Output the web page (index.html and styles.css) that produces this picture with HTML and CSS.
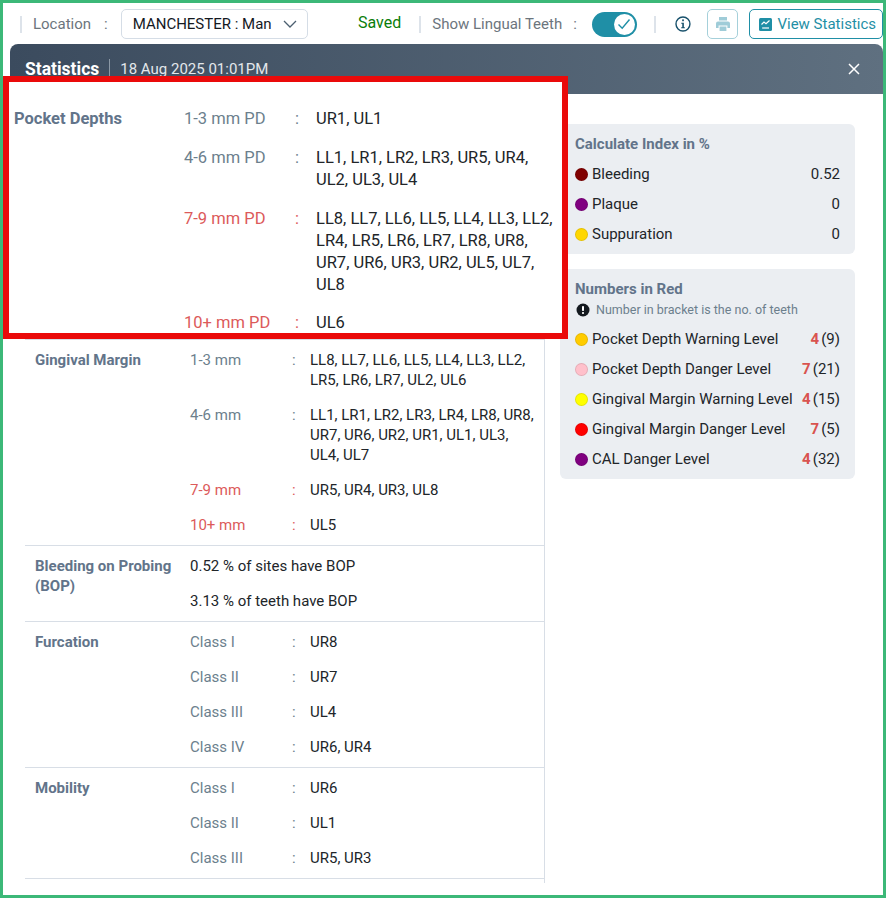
FILE: index.html
```html
<!DOCTYPE html>
<html lang="en">
<head>
    <meta charset="UTF-8">
    <meta name="viewport" content="width=device-width, initial-scale=1.0">
    <title>Statistics</title>
    <link rel="stylesheet" href="styles.css">
</head>
<body>
<div class="frame">

    <div class="toolbar">
        <span class="divider first"></span>
        <span class="tool-label">Location</span>
        <span class="tool-label colon-loc">:</span>
        <div class="select">
            <span>MANCHESTER : Man</span>
            <svg width="14" height="8" viewBox="0 0 14 8"><path d="M1 1l6 6 6-6" fill="none" stroke="#4b5f70" stroke-width="1.3"/></svg>
        </div>
        <span class="saved">Saved</span>
        <span class="divider saved-div"></span>
        <span class="tool-label">Show Lingual Teeth</span>
        <span class="tool-label colon-ling">:</span>
        <div class="toggle">
            <div class="knob">
                <svg width="14" height="12" viewBox="0 0 14 12"><path d="M1.5 6.5l3.7 3.7L12.5 1.5" fill="none" stroke="#1f8fa6" stroke-width="1.4"/></svg>
            </div>
        </div>
        <span class="divider toggle-div"></span>
        <svg class="info-icon" width="16" height="16" viewBox="0 0 16 16">
            <circle cx="8" cy="8" r="7" fill="none" stroke="#17506b" stroke-width="1.4"/>
            <rect x="7.2" y="3.4" width="1.7" height="1.8" fill="#17506b"/>
            <path d="M6.3 6.7h2.6v4.6h1v1H6.2v-1h1.1V7.7h-1z" fill="#17506b"/>
        </svg>
        <button class="print-btn">
            <svg width="14" height="14" viewBox="0 0 14 14"><path d="M3 0h8v3.4H3zM2 4.400h10a2 2 0 0 1 2 2V11h-2.600V8.600H2.600V11H0V6.400a2 2 0 0 1 2-2zM3.600 9.600h6.800V14H3.600z" fill="#9fccd8"/></svg>
        </button>
        <button class="stats-btn">
            <svg width="13" height="13" viewBox="0 0 13 13">
                <rect width="13" height="13" rx="1.500" fill="#1f8fa6"/>
                <path d="M2.500 6.500l2.500-2.500 2 1.600L10.500 2.500" fill="none" stroke="#fff" stroke-width="1.200"/>
                <path d="M3 10h7" stroke="#fff" stroke-width="1.200"/>
            </svg>
            <span>View Statistics</span>
        </button>
    </div>

    <div class="panel">
        <div class="panel-head">
            <span class="panel-title">Statistics</span>
            <span class="panel-date">18 Aug 2025 01:01PM</span>
            <svg class="close" width="12" height="12" viewBox="0 0 12 12"><path d="M1 1l10 10M11 1L1 11" stroke="#fff" stroke-width="1.500"/></svg>
        </div>

        <div class="panel-body">
            <div class="details">

                <div class="section">
                    <div class="section-name">Gingival Margin</div>
                    <div class="rows">
                        <div class="row"><span class="key">1-3 mm</span><span class="colon">:</span><span class="val">LL8, LL7, LL6, LL5, LL4, LL3, LL2, LR5, LR6, LR7, UL2, UL6</span></div>
                        <div class="row"><span class="key">4-6 mm</span><span class="colon">:</span><span class="val">LL1, LR1, LR2, LR3, LR4, LR8, UR8, UR7, UR6, UR2, UR1, UL1, UL3, UL4, UL7</span></div>
                        <div class="row danger"><span class="key">7-9 mm</span><span class="colon">:</span><span class="val">UR5, UR4, UR3, UL8</span></div>
                        <div class="row danger"><span class="key">10+ mm</span><span class="colon">:</span><span class="val">UL5</span></div>
                    </div>
                </div>

                <div class="section">
                    <div class="section-name">Bleeding on Probing (BOP)</div>
                    <div class="rows">
                        <div class="row"><span class="val">0.52 % of sites have BOP</span></div>
                        <div class="row"><span class="val">3.13 % of teeth have BOP</span></div>
                    </div>
                </div>

                <div class="section">
                    <div class="section-name">Furcation</div>
                    <div class="rows">
                        <div class="row"><span class="key">Class I</span><span class="colon">:</span><span class="val">UR8</span></div>
                        <div class="row"><span class="key">Class II</span><span class="colon">:</span><span class="val">UR7</span></div>
                        <div class="row"><span class="key">Class III</span><span class="colon">:</span><span class="val">UL4</span></div>
                        <div class="row"><span class="key">Class IV</span><span class="colon">:</span><span class="val">UR6, UR4</span></div>
                    </div>
                </div>

                <div class="section">
                    <div class="section-name">Mobility</div>
                    <div class="rows">
                        <div class="row"><span class="key">Class I</span><span class="colon">:</span><span class="val">UR6</span></div>
                        <div class="row"><span class="key">Class II</span><span class="colon">:</span><span class="val">UL1</span></div>
                        <div class="row"><span class="key">Class III</span><span class="colon">:</span><span class="val">UR5, UR3</span></div>
                    </div>
                </div>

            </div>

            <div class="side">
                <div class="card">
                    <div class="card-title">Calculate Index in %</div>
                    <div class="card-row"><span class="dot maroon"></span><span class="card-name">Bleeding</span><span>0.52</span></div>
                    <div class="card-row"><span class="dot purple"></span><span class="card-name">Plaque</span><span>0</span></div>
                    <div class="card-row"><span class="dot gold"></span><span class="card-name">Suppuration</span><span>0</span></div>
                </div>
                <div class="card">
                    <div class="card-title">Numbers in Red</div>
                    <div class="note">
                        <svg width="14" height="14" viewBox="0 0 14 14"><circle cx="7" cy="7" r="6.500" fill="#14191f"/><rect x="6" y="3" width="2" height="5" rx="0.800" fill="#fff"/><rect x="6" y="9" width="2" height="2" rx="0.800" fill="#fff"/></svg>
                        <span>Number in bracket is the no. of teeth</span>
                    </div>
                    <div class="card-row"><span class="dot amber"></span><span class="card-name">Pocket Depth Warning Level</span><span class="count"><b>4</b> (9)</span></div>
                    <div class="card-row"><span class="dot pink"></span><span class="card-name">Pocket Depth Danger Level</span><span class="count"><b>7</b> (21)</span></div>
                    <div class="card-row"><span class="dot yellow"></span><span class="card-name">Gingival Margin Warning Level</span><span class="count"><b>4</b> (15)</span></div>
                    <div class="card-row"><span class="dot red"></span><span class="card-name">Gingival Margin Danger Level</span><span class="count"><b>7</b> (5)</span></div>
                    <div class="card-row"><span class="dot purple"></span><span class="card-name">CAL Danger Level</span><span class="count"><b>4</b> (32)</span></div>
                </div>
            </div>
        </div>
    </div>

    <!-- red highlight box laid over the panel -->
    <div class="highlight">
        <div class="hl-name">Pocket Depths</div>
        <div class="hl-rows">
            <div class="hl-row"><span class="hl-key">1-3 mm PD</span><span class="hl-colon">:</span><span class="hl-val">UR1, UL1</span></div>
            <div class="hl-row"><span class="hl-key">4-6 mm PD</span><span class="hl-colon">:</span><span class="hl-val">LL1, LR1, LR2, LR3, UR5, UR4, UL2, UL3, UL4</span></div>
            <div class="hl-row danger"><span class="hl-key">7-9 mm PD</span><span class="hl-colon">:</span><span class="hl-val">LL8, LL7, LL6, LL5, LL4, LL3, LL2, LR4, LR5, LR6, LR7, LR8, UR8, UR7, UR6, UR3, UR2, UL5, UL7, UL8</span></div>
            <div class="hl-row danger last"><span class="hl-key">10+ mm PD</span><span class="hl-colon">:</span><span class="hl-val">UL6</span></div>
        </div>
    </div>

</div>
</body>
</html>
```

FILE: styles.css
```css
* {
    box-sizing: border-box;
}
body {
    margin: 0;
    overflow: hidden;
    background-color: #fff;
    font-family: "Roboto", "Liberation Sans", sans-serif;
    font-size: 15px;
    line-height: 20px;
    color: #212529;
}
.frame {
    position: relative;
    width: 886px;
    height: 898px;
    border: 3px solid #3cb878;
    overflow: hidden;
}

/* top bar */
.toolbar {
    display: flex;
    align-items: center;
    height: 41px;
    padding-top: 1px;
}
.divider {
    width: 2px;
    height: 17px;
    background-color: #dde3ea;
}
.divider.first {
    margin-left: 17px;
}
.divider.saved-div {
    margin-left: 18px;
}
.divider.toggle-div {
    margin-left: 17px;
}
.tool-label {
    font-size: 15px;
    color: #6c757d;
    white-space: nowrap;
}
.divider + .tool-label {
    margin-left: 11px;
}
.colon-loc {
    margin-left: 13px;
}
.colon-ling {
    margin-left: 11px;
}
.select {
    display: flex;
    align-items: center;
    justify-content: space-between;
    width: 188px;
    height: 30px;
    margin-left: 13px;
    padding: 0 10px 0 11px;
    border: 1px solid #d5dde6;
    border-radius: 5px;
    color: #14191f;
}
.saved {
    margin-left: 50px;
    margin-top: -3px;
    font-size: 16px;
    color: #0a7d0a;
}
.toggle {
    display: flex;
    align-items: center;
    justify-content: flex-end;
    width: 45px;
    height: 25px;
    margin-left: 15px;
    padding-right: 2px;
    border-radius: 13px;
    background-color: #1f8fa6;
}
.knob {
    display: flex;
    align-items: center;
    justify-content: center;
    width: 21px;
    height: 21px;
    border-radius: 50%;
    background-color: #fff;
}
.info-icon {
    margin-left: 19px;
}
.print-btn {
    display: flex;
    align-items: center;
    justify-content: center;
    width: 32px;
    height: 30px;
    margin-left: 16px;
    padding: 0;
    border: 1px solid #a5d0da;
    border-radius: 5px;
    background-color: #fff;
}
.stats-btn {
    display: flex;
    align-items: center;
    gap: 5px;
    width: 134px;
    height: 30px;
    margin-left: 11px;
    padding: 0 0 0 9px;
    border: 1px solid #1f8fa6;
    border-radius: 5px;
    background-color: #fff;
    font-family: inherit;
    font-size: 15px;
    color: #1f8fa6;
    white-space: nowrap;
}

/* panel */
.panel {
    height: 839px;
    margin-left: 7px;
    overflow: hidden;
}
.panel-head {
    display: flex;
    align-items: center;
    height: 50px;
    padding: 0 23px 1px 15px;
    border-radius: 8px 8px 0 0;
    background: linear-gradient(90deg, #3b4b5e, #5f7080);
    color: #fff;
}
.panel-title {
    padding-right: 10px;
    border-right: 1px solid #8b98a5;
    font-size: 17.5px;
    font-weight: 700;
}
.panel-date {
    margin-left: 10px;
    font-size: 15px;
    color: #e3e7eb;
}
.close {
    margin-left: auto;
}
.panel-body {
    display: flex;
    height: 789px;
    padding-left: 15px;
    gap: 15px;
}

/* left column; the first 245px sit behind the highlight box */
.details {
    width: 520px;
    padding-top: 245px;
    border-right: 1px solid #d8dee6;
}
.section {
    display: flex;
    padding: 10px 0;
    border-top: 1px solid #d8dee6;
}
.section:last-child {
    border-bottom: 1px solid #d8dee6;
}
.section-name {
    flex: none;
    width: 165px;
    padding: 0 10px;
    font-weight: 700;
    color: #62748a;
}
.rows {
    display: flex;
    flex-direction: column;
    gap: 15px;
}
.row {
    display: flex;
}
.key {
    flex: none;
    width: 102px;
    color: #6c7f8d;
}
.colon {
    flex: none;
    width: 18px;
    color: #6c7f8d;
}
.val {
    width: 228px;
    white-space: normal;
}
.row:not(:has(.key)) .val {
    width: 340px;
}
.danger .key,
.danger .colon {
    color: #dc5a5a;
}

/* right column */
.side {
    display: flex;
    flex-direction: column;
    gap: 15px;
    width: 295px;
    padding-top: 30px;
}
.card {
    display: flex;
    flex-direction: column;
    gap: 10px;
    padding: 10px 15px;
    border-radius: 6px;
    background-color: #ebeef2;
}
.card-title {
    font-weight: 700;
    color: #62748a;
}
.note {
    display: flex;
    align-items: center;
    gap: 6px;
    margin-top: -8px;
    font-size: 12.5px;
    line-height: 18px;
    color: #6c7f8d;
}
.note svg {
    margin-left: 1px;
}
.card-row {
    display: flex;
    align-items: center;
}
.card-row b {
    color: #d9534f;
}
.count {
    word-spacing: -1.5px;
}
.card-name {
    flex: 1;
    white-space: nowrap;
}
.dot {
    flex: none;
    width: 13px;
    height: 13px;
    margin-right: 4px;
    border-radius: 50%;
    border: 1px solid rgba(0, 0, 0, 0.1);
}
.maroon { background-color: #800000; }
.purple { background-color: #800080; }
.gold { background-color: #ffd700; }
.amber { background-color: #ffcc00; }
.pink { background-color: #ffc0cb; }
.yellow { background-color: #ffff00; }
.red { background-color: #ff0000; }

/* highlight box */
.highlight {
    position: absolute;
    top: 73px;
    left: 0;
    display: flex;
    width: 565px;
    height: 263px;
    padding: 26px 0 0 5px;
    border: 6px solid #ea0a0a;
    background-color: #fff;
    font-size: 16.5px;
    line-height: 22px;
    overflow: hidden;
}
.hl-name {
    flex: none;
    width: 170px;
    font-weight: 700;
    color: #62748a;
}
.hl-rows {
    display: flex;
    flex-direction: column;
    gap: 17px;
}
.hl-row {
    display: flex;
}
.hl-row.last {
    margin-top: -1px;
}
.hl-key {
    flex: none;
    width: 111px;
    color: #6c7f8d;
}
.hl-colon {
    flex: none;
    width: 21px;
    color: #6c7f8d;
}
.hl-val {
    width: 240px;
}
.hl-row.danger .hl-key,
.hl-row.danger .hl-colon {
    color: #dc5a5a;
}
```
